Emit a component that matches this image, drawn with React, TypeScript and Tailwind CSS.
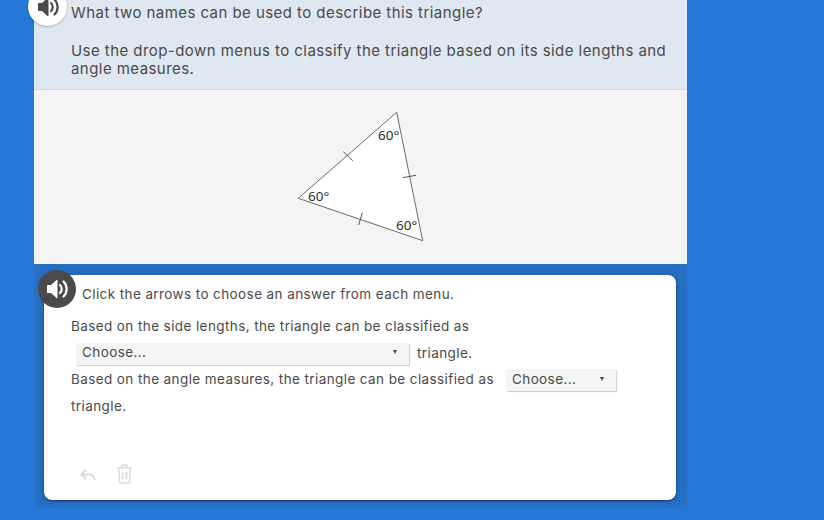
function Speaker({ color }: { color: string }) {
  return (
    <svg viewBox="0 0 24 24" className="h-[24px] w-[24px]">
      <path d="M2.5 8.5h3.5L12 3v18l-6-5.5H2.5z" fill={color} stroke={color} strokeLinejoin="round" />
      <path d="M15 8a5.5 5.5 0 0 1 0 8" fill="none" stroke={color} strokeWidth="2.2" strokeLinecap="round" />
      <path d="M18.5 4.5a10.5 10.5 0 0 1 0 15" fill="none" stroke={color} strokeWidth="2.2" strokeLinecap="round" />
    </svg>
  );
}

function Choose({ className }: { className: string }) {
  return (
    <span
      className={`inline-flex h-[22px] items-center justify-between rounded-[1px] bg-[#f5f5f5] pl-[6px] pr-[12px] text-[13.5px] tracking-[0.4px] shadow-[1px_1px_1px_rgba(0,0,0,0.2)] ${className}`}
    >
      Choose...
      <span className="h-0 w-0 border-x-[2.5px] border-t-[4px] border-x-transparent border-t-[#444]" />
    </span>
  );
}

export default function App() {
  return (
    <div className="h-[520px] overflow-hidden bg-[#2478d8] font-['Inter',sans-serif] text-[#4a4a4a]">
      <div className="relative ml-[34px] w-[653px]">
        <div className="absolute left-[-6px] top-[-13px] z-10 flex h-[39px] w-[39px] items-center justify-center rounded-full bg-white shadow-[0_1px_2px_rgba(0,0,0,0.25)]">
          <Speaker color="#4a4a4a" />
        </div>
        <div className="h-[90px] border-b border-[#d5d9e0] bg-[#dfe7f1] pl-[37px] pr-[20px] pt-[4px] text-[15px] leading-[18px] tracking-[0.44px]">
          <p>What two names can be used to describe this triangle?</p>
          <p className="mt-[20px]">
            Use the drop-down menus to classify the triangle based on its side lengths and angle measures.
          </p>
        </div>
        <div className="flex h-[174px] justify-center bg-[#f4f4f4]">
          <svg width="653" height="174" viewBox="34 90 653 174" className="font-['Open_Sans',sans-serif]">
            <polygon points="396.7,112.3 298.3,198.3 422.7,240.7" fill="#ffffff" stroke="#6a6a6a" strokeWidth="1" />
            <path d="M343.3 151.7L352.7 160.7M402.7 177.7L416 175.3M362.3 212.7L358.7 225" stroke="#555" strokeWidth="1" />
            <text x="378" y="140" fontSize="13.5" fill="#222">60°</text>
            <text x="308" y="201" fontSize="13.5" fill="#222">60°</text>
            <text x="396" y="230" fontSize="13.5" fill="#222">60°</text>
          </svg>
        </div>
        <div className="relative h-[244px] bg-[#2770c6] pl-[10px] pr-[11px] pt-[11px]">
          <div className="absolute left-[4px] top-[6px] z-10 flex h-[38px] w-[38px] items-center justify-center rounded-full bg-[#4a4a4a]">
            <Speaker color="#ffffff" />
          </div>
          <div className="h-[225px] rounded-[8px] bg-white pl-[27px] pt-[10px] text-[13.5px] tracking-[0.4px] shadow-[0_1px_2px_rgba(15,35,70,0.7),0_0_8px_rgba(25,50,90,0.35)]">
            <p className="ml-[11px] leading-[18px]">Click the arrows to choose an answer from each menu.</p>
            <p className="mt-[14px] leading-[18px]">Based on the side lengths, the triangle can be classified as</p>
            <div className="mt-[8px] flex items-center gap-[8px] leading-[18px]">
              <span className="ml-[5px] flex">
                <Choose className="w-[333px] pb-[4px]" />
              </span>
              <span className="mb-[2px]">triangle.</span>
            </div>
            <div className="mt-[4px] flex items-center gap-[12px] leading-[18px]">
              <span className="mb-[2px]">Based on the angle measures, the triangle can be classified as</span>
              <Choose className="w-[110px] pb-[2px]" />
            </div>
            <p className="mt-[6px] leading-[18px]">triangle.</p>
            <div className="mt-[48px] flex items-center gap-[19px] pl-[8px]">
              <svg viewBox="0 0 18 18" className="mt-[3px] h-[18px] w-[18px]" fill="none" stroke="#dcdcdc" strokeWidth="2.2">
                <path d="M7 4L2.5 8.5L7 13" strokeLinejoin="round" />
                <path d="M3 8.5h7.5c3 0 4.5 2 5 5" strokeLinecap="round" />
              </svg>
              <svg viewBox="0 0 18 22" className="h-[21px] w-[17px]" fill="none" stroke="#dcdcdc" strokeWidth="1.6">
                <path d="M1 5h16M6.5 5V2h5V5" />
                <path d="M3 5l.8 14a2 2 0 0 0 2 2h6.4a2 2 0 0 0 2-2L15 5" />
                <path d="M7 9v8M11 9v8" strokeWidth="2.2" />
              </svg>
            </div>
          </div>
        </div>
      </div>
    </div>
  );
}
